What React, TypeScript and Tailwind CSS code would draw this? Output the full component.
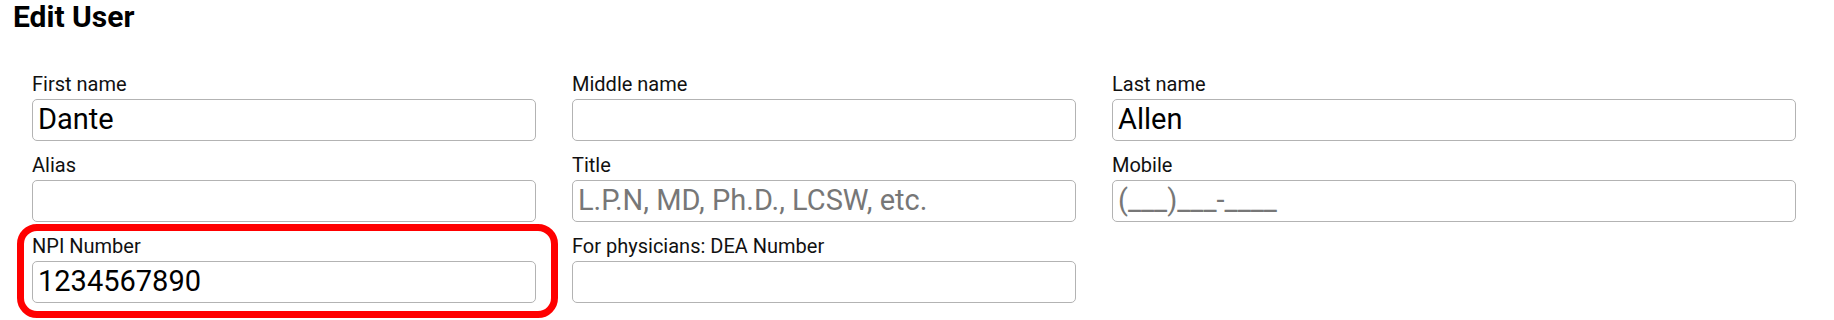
import React from 'react'

interface Field {
  label: string
  value?: string
  placeholder?: string
}

const FIELDS: Field[] = [
  { label: 'First name', value: 'Dante' },
  { label: 'Middle name' },
  { label: 'Last name', value: 'Allen' },
  { label: 'Alias' },
  { label: 'Title', placeholder: 'L.P.N, MD, Ph.D., LCSW, etc.' },
  { label: 'Mobile', placeholder: '(___)___-____' },
  { label: 'NPI Number', value: '1234567890' },
  { label: 'For physicians: DEA Number' },
]

function FormField({ field }: { field: Field }) {
  return (
    <label className="flex flex-col">
      <span className="text-[20px] leading-[22px] text-[#111] mb-[4px]">{field.label}</span>
      <input
        defaultValue={field.value}
        placeholder={field.placeholder}
        className="h-[42px] w-full rounded-[5px] border border-[#b3b3b3] bg-white px-[5px] text-[29px] text-black placeholder:text-[#777] outline-none"
      />
    </label>
  )
}

export default function App() {
  return (
    <div
      className="relative w-[1834px] h-[320px] overflow-hidden bg-white"
      style={{ fontFamily: 'Roboto, "Noto Sans", sans-serif' }}
    >
      <h1 className="pl-[13px] text-[30px] leading-[34px] font-bold text-black">Edit User</h1>

      {/* form grid */}
      <div className="ml-[32px] mt-[39px] grid grid-cols-[504px_504px_684px] gap-x-[36px] gap-y-[13px]">
        {FIELDS.map(f => <FormField key={f.label} field={f} />)}
      </div>

      {/* highlight annotation */}
      <div className="absolute left-[17px] top-[224px] w-[541px] h-[94px] rounded-[20px] border-[7px] border-[#ff0000] pointer-events-none" />
    </div>
  )
}
